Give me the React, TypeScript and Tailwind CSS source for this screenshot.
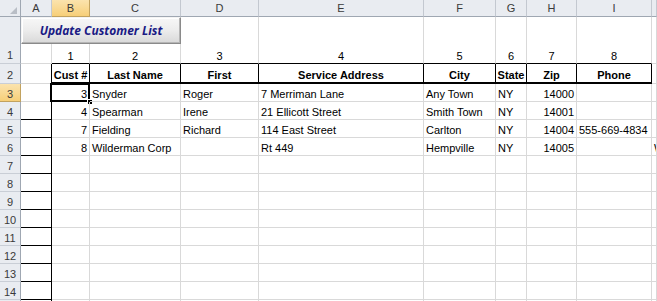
import React from "react";

const COLS = ["A", "B", "C", "D", "E", "F", "G", "H", "I", "J"];

type Cell = { t: string; r?: boolean };

const data: Cell[][] = [
  [{ t: "" }, { t: "3", r: true }, { t: "Snyder" }, { t: "Roger" }, { t: "7 Merriman Lane" }, { t: "Any Town" }, { t: "NY" }, { t: "14000", r: true }, { t: "" }, { t: "" }],
  [{ t: "" }, { t: "4", r: true }, { t: "Spearman" }, { t: "Irene" }, { t: "21 Ellicott Street" }, { t: "Smith Town" }, { t: "NY" }, { t: "14001", r: true }, { t: "" }, { t: "" }],
  [{ t: "" }, { t: "7", r: true }, { t: "Fielding" }, { t: "Richard" }, { t: "114 East Street" }, { t: "Carlton" }, { t: "NY" }, { t: "14004", r: true }, { t: "555-669-4834" }, { t: "" }],
  [{ t: "" }, { t: "8", r: true }, { t: "Wilderman Corp" }, { t: "" }, { t: "Rt 449" }, { t: "Hempville" }, { t: "NY" }, { t: "14005", r: true }, { t: "" }, { t: "Wilderman" }],
];

const headers = ["Cust #", "Last Name", "First", "Service Address", "City", "State", "Zip", "Phone"];

const rowHead =
  "flex items-end justify-center pb-[2px] leading-[12px] bg-[#e9ecf1] border-r border-b border-r-[#9fa7b2] border-b-[#c9ced6] text-[11px] text-[#3a3a3a]";

export default function App() {
  const cells: React.ReactNode[] = [];

  // column header row
  cells.push(
    <div
      key="corner"
      className="flex items-end justify-end pr-[3px] pb-[2px] bg-[#e9ecf1] border-r border-b border-r-[#9fa7b2] border-b-[#9fa7b2]"
    >
      <svg width="7" height="7" viewBox="0 0 7 7">
        <polygon points="7,0 7,7 0,7" fill="#b9bec6" />
      </svg>
    </div>
  );
  COLS.forEach((c) => {
    const sel = c === "B";
    cells.push(
      <div
        key={"h" + c}
        className={
          "flex items-center justify-center text-[11px] border-r border-b " +
          (sel
            ? "bg-gradient-to-b from-[#fbe3ad] to-[#f7cf78] border-r-[#c2a25f] border-b-[#c2a25f] text-[#3a3a3a]"
            : "bg-[#e9ecf1] border-r-[#c3c8d0] border-b-[#9fa7b2] text-[#3a3a3a]")
        }
      >
        {c === "J" ? "" : c}
      </div>
    );
  });

  // row 1
  cells.push(
    <div key="r1h" className={rowHead}>
      1
    </div>
  );
  COLS.forEach((c, i) => {
    const inTable = i >= 1 && i <= 8;
    cells.push(
      <div
        key={"r1" + c}
        className={
          "flex items-end justify-center pb-[1px] leading-[12px] text-[11px] border-r border-b border-r-[#d9d9d9] " +
          (inTable ? "border-b-black" : "border-b-[#d9d9d9]")
        }
      >
        {inTable ? String(i) : ""}
      </div>
    );
  });

  // row 2
  cells.push(
    <div key="r2h" className={rowHead}>
      2
    </div>
  );
  COLS.forEach((c, i) => {
    const inTable = i >= 1 && i <= 8;
    let cls =
      "flex items-end justify-center pb-[1px] leading-[12px] text-[11px] font-bold whitespace-nowrap overflow-hidden border-r ";
    if (i === 0) cls += "border-r-black border-b border-b-[#d9d9d9]";
    else if (inTable) cls += "border-r-black border-b-2 border-b-black";
    else cls += "border-r-[#d9d9d9] border-b border-b-[#d9d9d9]";
    cells.push(
      <div key={"r2" + c} className={cls}>
        {inTable ? headers[i - 1] : ""}
      </div>
    );
  });

  // rows 3..15
  for (let r = 3; r <= 15; r++) {
    const sel = r === 3;
    cells.push(
      <div
        key={"rh" + r}
        className={
          "flex items-end justify-center pb-[1px] leading-[12px] border-r border-b text-[11px] text-[#3a3a3a] " +
          (sel
            ? "bg-gradient-to-b from-[#fbe3ad] to-[#f7cf78] border-r-[#c2a25f] border-b-[#c2a25f]"
            : "bg-[#e9ecf1] border-r-[#9fa7b2] border-b-[#c9ced6]")
        }
      >
        {r}
      </div>
    );
    const row = data[r - 3];
    COLS.forEach((c, i) => {
      const cell: Cell = row ? row[i] : { t: "" };
      let cls = "relative flex items-end pb-[1px] leading-[12px] text-[11px] whitespace-nowrap border-r border-b ";
      if (i === 0) {
        cls += "border-r-black " + (r >= 4 ? "border-b-black" : "border-b-[#d9d9d9]");
      } else {
        cls += "border-r-[#d9d9d9] border-b-[#d9d9d9]";
      }
      cls += cell.r ? " justify-end pr-[2px]" : " justify-start pl-[2px]";
      if (i === 9) cls += " overflow-hidden";
      cells.push(
        <div key={"c" + r + c} className={cls}>
          {cell.t}
          {sel && i === 1 && (
            <div className="absolute left-[-2px] top-[-1px] right-[-1px] bottom-[-1px] border-2 border-black pointer-events-none">
              <div className="absolute right-[-5px] bottom-[-5px] w-[6px] h-[6px] bg-black border border-white" />
            </div>
          )}
        </div>
      );
    });
  }

  return (
    <div
      className="relative w-[657px] h-[301px] overflow-hidden bg-white text-black"
      style={{ fontFamily: '"Liberation Sans", Arial, sans-serif' }}
    >
      <div className="grid grid-cols-[21px_31px_38px_91px_78px_165px_72px_31px_50px_75px_1fr] grid-rows-[17px_47px_20px_repeat(13,18px)]">
        {cells}
      </div>
      <div className="absolute left-[21px] top-[17px] w-[160px] h-[27px] flex items-center justify-center bg-gradient-to-b from-[#f7f7f7] via-[#ececec] to-[#d9d9d9] border border-t-[#f4f4f4] border-l-[#f4f4f4] border-r-[#8a8a8a] border-b-[#8a8a8a] shadow-[inset_-1px_-1px_0_#b5b5b5,inset_1px_1px_0_#ffffff]">
        <span
          className="text-[12px] italic font-bold text-[#1a1a84]"
          style={{ fontFamily: '"Open Sans", "Liberation Sans", sans-serif' }}
        >
          Update Customer List
        </span>
      </div>
    </div>
  );
}
